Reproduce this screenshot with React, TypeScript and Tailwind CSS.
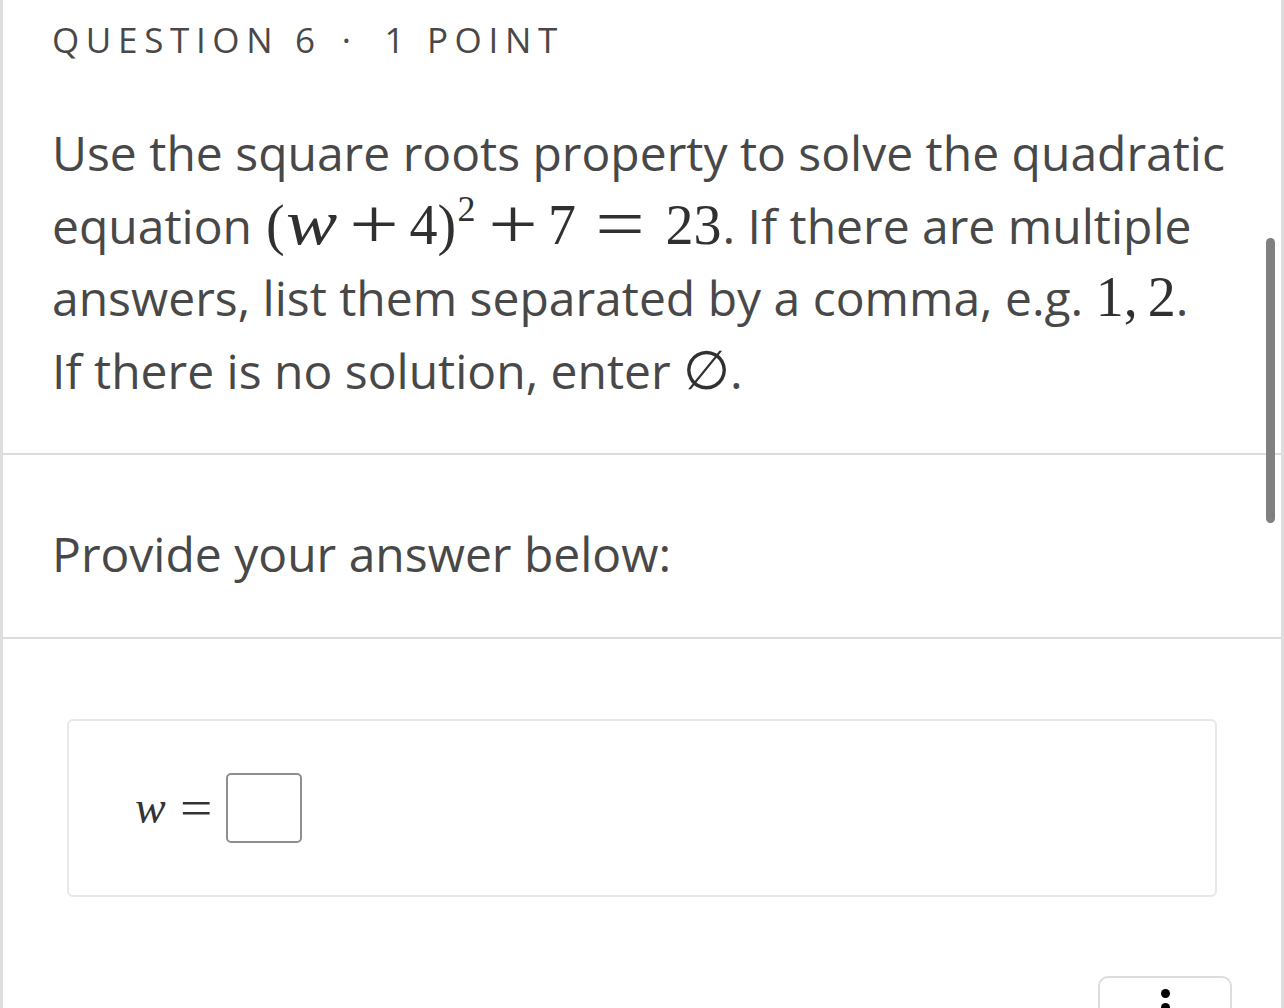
import React from 'react';

const sans = { fontFamily: '"Open Sans", "Noto Sans", sans-serif' };

// KaTeX-ish glyph box: fixed width so the spacing follows the rendered formula
const G = ({ w, children, className = '' }: { w: string; children: React.ReactNode; className?: string }) => (
  <span className={`inline-block text-center leading-[20px] ${w} ${className}`}>{children}</span>
);

const M = ({ children, className = '' }: { children: React.ReactNode; className?: string }) => (
  <span className={`font-['Liberation_Serif',serif] text-[56px] leading-none text-[#303030] ${className}`}>{children}</span>
);

export default function App() {
  return (
    <div
      className="relative h-[1008px] w-full overflow-hidden bg-white border-x-[3px] border-[#dedede] text-[#484848]"
      style={sans}
    >
      {/* header */}
      <div className="pl-[49px] pt-[22px] text-[35px] leading-none tracking-[0.19em] whitespace-nowrap">
        QUESTION 6<span className="ml-[20px] mr-[27px]">·</span>1 POINT
      </div>

      {/* question */}
      <p className="mt-[60px] pl-[49px] pb-[46px] text-[48px] leading-[72.5px] whitespace-nowrap">
        Use the square roots property to solve the quadratic
        <br />
        equation{' '}
        <M>
          <G w="w-[22px]">(</G>
          <G w="w-[58px]" className="origin-left text-left text-[64px] italic [transform:scaleX(1.2)]">w</G>
          <G w="w-[60px]" className="text-[72px] align-[-4px] [transform:scaleX(1.22)]">+</G>
          <G w="w-[33px]" className="pl-[5px]">4</G>
          <G w="w-[16px]">)</G>
          <G w="w-[26px]" className="relative top-[-23px] text-[36px]">2</G>
          <G w="w-[68px]" className="text-[72px] align-[-4px] [transform:scaleX(1.22)]">+</G>
          <G w="w-[29px]">7</G>
          <G w="w-[88px]" className="text-[72px] align-[-4px] [transform:scaleX(1.22)]">=</G>
          <G w="w-[58px]">23</G>
        </M>
        . If there are multiple
        <br />
        answers, list them separated by a comma, e.g. <M>1,<span className="ml-[10px]">2</span></M>.
        <br />
        If there is no solution, enter{' '}
        <span className="font-['DejaVu_Sans',sans-serif] text-[54px] font-extralight leading-none text-[#303030]">∅</span>.
      </p>

      <div className="h-[2px] bg-[#dddddd]" />

      <div className="pl-[49px] pt-[63px] pb-[46px] text-[48px] leading-[72.5px] whitespace-nowrap">
        Provide your answer below:
      </div>

      <div className="h-[2px] bg-[#dddddd]" />

      {/* answer card */}
      <div className="mx-[64px] mt-[80px] flex h-[178px] items-center rounded-md border-2 border-[#e8e8e8] pl-[66px]">
        <span className="font-['Liberation_Serif',serif] text-[46px] italic leading-none text-[#333]">w</span>
        <span className="ml-[16px] font-['Liberation_Serif',serif] text-[50px] leading-none text-[#333] [transform:scaleX(1.15)]">=</span>
        <div className="ml-[16px] h-[70px] w-[76px] rounded-[5px] border-2 border-[#8f8f8f]" />
      </div>

      {/* more menu */}
      <div className="mt-[79px] flex justify-end pr-[49px]">
        <button className="flex h-[60px] w-[134px] flex-col items-center gap-[5px] rounded-[10px] border-2 border-[#dddddd] pt-[11px]">
          <span className="h-[9px] w-[9px] rounded-full bg-black" />
          <span className="h-[9px] w-[9px] rounded-full bg-black" />
          <span className="h-[9px] w-[9px] rounded-full bg-black" />
        </button>
      </div>

      {/* scroll thumb */}
      <div className="absolute left-[1263px] top-[238px] h-[285px] w-[9px] rounded-full bg-[#808080]" />
    </div>
  );
}
